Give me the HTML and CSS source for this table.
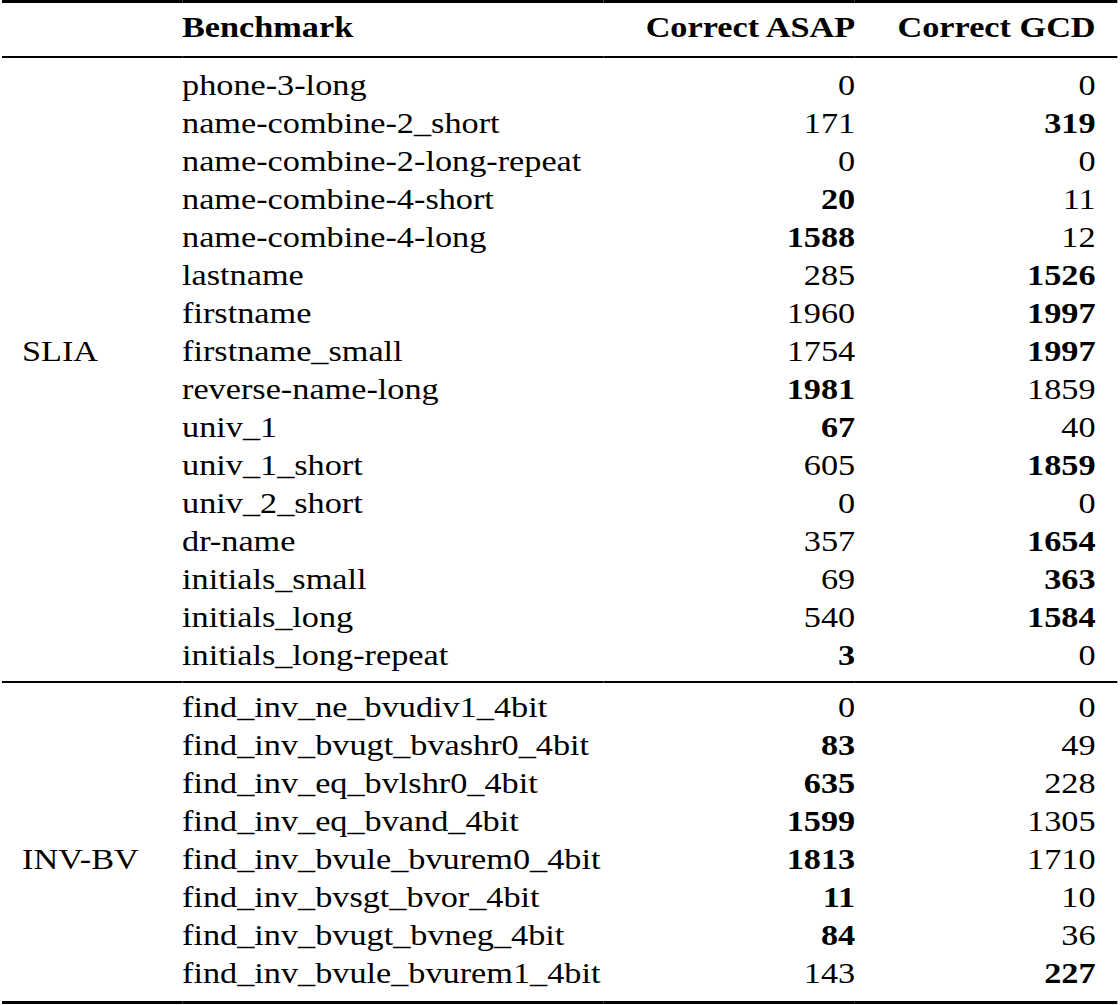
FILE: index.html
```html
<!DOCTYPE html>
<html>
<head>
<meta charset="utf-8">
<link rel="stylesheet" href="styles.css">
</head>
<body>
<div class="sheet">
<table class="results">
  <colgroup>
    <col class="c-group"><col class="c-name"><col class="c-asap"><col class="c-gcd">
  </colgroup>
  <thead>
    <tr>
      <th class="group"></th>
      <th class="name">Benchmark</th>
      <th class="num">Correct ASAP</th>
      <th class="num last">Correct GCD</th>
    </tr>
  </thead>
  <tbody class="section">
    <tr class="first"><td class="group"></td><td class="name">phone-3-long</td><td class="num">0</td><td class="num last">0</td></tr>
    <tr><td class="group"></td><td class="name">name-combine-2_short</td><td class="num">171</td><td class="num last"><b>319</b></td></tr>
    <tr><td class="group"></td><td class="name">name-combine-2-long-repeat</td><td class="num">0</td><td class="num last">0</td></tr>
    <tr><td class="group"></td><td class="name">name-combine-4-short</td><td class="num"><b>20</b></td><td class="num last">11</td></tr>
    <tr><td class="group"></td><td class="name">name-combine-4-long</td><td class="num"><b>1588</b></td><td class="num last">12</td></tr>
    <tr><td class="group"></td><td class="name">lastname</td><td class="num">285</td><td class="num last"><b>1526</b></td></tr>
    <tr><td class="group"></td><td class="name">firstname</td><td class="num">1960</td><td class="num last"><b>1997</b></td></tr>
    <tr><td class="group">SLIA</td><td class="name">firstname_small</td><td class="num">1754</td><td class="num last"><b>1997</b></td></tr>
    <tr><td class="group"></td><td class="name">reverse-name-long</td><td class="num"><b>1981</b></td><td class="num last">1859</td></tr>
    <tr><td class="group"></td><td class="name">univ_1</td><td class="num"><b>67</b></td><td class="num last">40</td></tr>
    <tr><td class="group"></td><td class="name">univ_1_short</td><td class="num">605</td><td class="num last"><b>1859</b></td></tr>
    <tr><td class="group"></td><td class="name">univ_2_short</td><td class="num">0</td><td class="num last">0</td></tr>
    <tr><td class="group"></td><td class="name">dr-name</td><td class="num">357</td><td class="num last"><b>1654</b></td></tr>
    <tr><td class="group"></td><td class="name">initials_small</td><td class="num">69</td><td class="num last"><b>363</b></td></tr>
    <tr><td class="group"></td><td class="name">initials_long</td><td class="num">540</td><td class="num last"><b>1584</b></td></tr>
    <tr class="last-row"><td class="group"></td><td class="name">initials_long-repeat</td><td class="num"><b>3</b></td><td class="num last">0</td></tr>
  </tbody>
  <tbody class="section second">
    <tr class="first"><td class="group"></td><td class="name">find_inv_ne_bvudiv1_4bit</td><td class="num">0</td><td class="num last">0</td></tr>
    <tr><td class="group"></td><td class="name">find_inv_bvugt_bvashr0_4bit</td><td class="num"><b>83</b></td><td class="num last">49</td></tr>
    <tr><td class="group"></td><td class="name">find_inv_eq_bvlshr0_4bit</td><td class="num"><b>635</b></td><td class="num last">228</td></tr>
    <tr><td class="group"></td><td class="name">find_inv_eq_bvand_4bit</td><td class="num"><b>1599</b></td><td class="num last">1305</td></tr>
    <tr><td class="group">INV-BV</td><td class="name">find_inv_bvule_bvurem0_4bit</td><td class="num"><b>1813</b></td><td class="num last">1710</td></tr>
    <tr><td class="group"></td><td class="name">find_inv_bvsgt_bvor_4bit</td><td class="num"><b>11</b></td><td class="num last">10</td></tr>
    <tr><td class="group"></td><td class="name">find_inv_bvugt_bvneg_4bit</td><td class="num"><b>84</b></td><td class="num last">36</td></tr>
    <tr class="end-row"><td class="group"></td><td class="name">find_inv_bvule_bvurem1_4bit</td><td class="num">143</td><td class="num last"><b>227</b></td></tr>
  </tbody>
</table>
</div>
</body>
</html>
```

FILE: styles.css
```css
html, body {
  margin: 0;
  padding: 0;
  background: #ffffff;
}

body {
  font-family: "Liberation Serif", "Times New Roman", serif;
  font-size: 29.6px;
  color: #000000;
}

/* The typeset table is horizontally stretched in the reference */
.sheet {
  margin-left: 2px;
  width: 964px;
  transform: scaleX(1.157);
  transform-origin: 0 0;
}

.results {
  width: 964px;
  border-collapse: collapse;
  table-layout: fixed;
  border-top: 3px solid #000;
  border-bottom: 3px solid #000;
}

.c-group { width: 155.6px; }
.c-name { width: 364.4px; }
.c-asap { width: 217.4px; }
.c-gcd { width: 226.6px; }

.results th,
.results td {
  padding: 0;
  line-height: 38px;
  height: 38px;
  white-space: nowrap;
  vertical-align: baseline;
}

.results th {
  font-weight: bold;
  padding-top: 5px;
  padding-bottom: 10px;
}

.results thead tr {
  border-bottom: 2px solid #000;
}

.results .group {
  text-align: left;
  padding-left: 17.3px;
}

.results .name {
  text-align: left;
}

.results .num {
  text-align: right;
}

.results .num.last {
  padding-right: 18.8px;
}

.results b {
  font-weight: bold;
}

.section .first td {
  padding-top: 8px;
}

.section .last-row td {
  padding-bottom: 7px;
}

.section .last-row {
  border-bottom: 2px solid #000;
}

.second .first td {
  padding-top: 5px;
}

.second .end-row td {
  padding-bottom: 9px;
}
```
